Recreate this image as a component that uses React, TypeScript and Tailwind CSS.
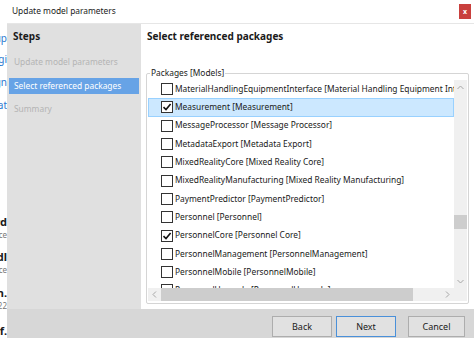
import React from "react";

const items: { label: string; checked?: boolean; selected?: boolean }[] = [
  { label: "MaterialHandlingEquipmentInterface [Material Handling Equipment Interface]" },
  { label: "Measurement [Measurement]", checked: true, selected: true },
  { label: "MessageProcessor [Message Processor]" },
  { label: "MetadataExport [Metadata Export]" },
  { label: "MixedRealityCore [Mixed Reality Core]" },
  { label: "MixedRealityManufacturing [Mixed Reality Manufacturing]" },
  { label: "PaymentPredictor [PaymentPredictor]" },
  { label: "Personnel [Personnel]" },
  { label: "PersonnelCore [Personnel Core]", checked: true },
  { label: "PersonnelManagement [PersonnelManagement]" },
  { label: "PersonnelMobile [PersonnelMobile]" },
  { label: "PersonnelUpgrade [PersonnelUpgrade]" },
];

function Checkbox({ checked }: { checked?: boolean }) {
  return (
    <span className="w-[12px] h-[12px] border border-[#333] bg-white flex items-center justify-center shrink-0">
      {checked && (
        <svg width="10" height="10" viewBox="0 0 10 10">
          <path d="M1.5 5.2 L4 7.6 L8.6 2" fill="none" stroke="#111" strokeWidth="1.6" />
        </svg>
      )}
    </span>
  );
}

function Frag({ text, className }: { text: string; className: string }) {
  return (
    <div className={"flex justify-end whitespace-nowrap " + className}>
      <span>{text}</span>
    </div>
  );
}

export default function App() {
  return (
    <div className="w-[474px] h-[338px] bg-white flex overflow-hidden font-['Noto_Sans',sans-serif] text-[8.4px] text-[#1a1a1a]">
      {/* page behind the dialog */}
      <div className="w-[7px] shrink-0 overflow-hidden flex flex-col">
        <div className="h-[33px]" />
        <Frag text="Setup" className="h-[14px] text-[#2b79d0] text-[10px] leading-[14px]" />
        <div className="h-[7px]" />
        <Frag text="Logi" className="h-[14px] text-[#2b79d0] text-[10px] leading-[14px]" />
        <div className="h-[10px]" />
        <Frag text="Design" className="h-[14px] text-[#2b79d0] text-[10px] leading-[14px]" />
        <div className="h-[9px]" />
        <Frag text="Format" className="h-[14px] text-[#2b79d0] text-[10px] leading-[14px]" />
        <div className="h-[110px]" />
        <Frag text="Record" className="h-[14px] font-bold text-[11px] leading-[14px]" />
        <Frag text="Source" className="h-[11px] text-[#777] text-[8px] leading-[11px]" />
        <div className="h-[11px]" />
        <Frag text="Modl" className="h-[14px] font-bold text-[11px] leading-[14px]" />
        <Frag text="Source" className="h-[11px] text-[#777] text-[8px] leading-[11px]" />
        <div className="h-[11px]" />
        <Frag text="Design." className="h-[14px] font-bold text-[11px] leading-[14px]" />
        <Frag text="2022" className="h-[11px] text-[#777] text-[8px] leading-[11px]" />
        <div className="h-[14px]" />
        <Frag text="of." className="h-[14px] font-bold text-[11px] leading-[14px]" />
      </div>

      {/* dialog */}
      <div className="flex-1 flex flex-col min-w-0">
        <div className="h-[24px] shrink-0 flex items-center justify-between pl-[5px] pr-[3px] border-b border-[#e6e6e6]">
          <span>Update model parameters</span>
          <span className="w-[12px] h-[15px] bg-[#c9403d] text-white text-[7px] font-bold flex items-center justify-center leading-none">
            x
          </span>
        </div>

        <div className="flex-1 flex min-h-0">
          {/* steps */}
          <div className="w-[134px] shrink-0 bg-[#e0e0e0] flex flex-col px-[2px] pt-[4px]">
            <div className="font-bold text-[10px] pl-[4px] h-[16px] leading-[16px]">Steps</div>
            <div className="h-[10px]" />
            <div className="pl-[5px] h-[16px] leading-[16px] text-[#b4b4b4]">Update model parameters</div>
            <div className="h-[8px]" />
            <div className="pl-[5px] h-[16px] leading-[16px] bg-[#67a3e6] text-white">Select referenced packages</div>
            <div className="h-[7px]" />
            <div className="pl-[5px] h-[16px] leading-[16px] text-[#b4b4b4]">Summary</div>
          </div>

          {/* content */}
          <div className="flex-1 min-w-0 bg-white ml-[2px] flex flex-col pl-[3px] pr-[5px] pt-[4px] pb-[5px]">
            <div className="font-bold text-[10px] pl-[1px] h-[16px] leading-[16px]">Select referenced packages</div>
            <div className="flex-1 min-h-0 mt-[29px] border border-[#d5d5d5] rounded-[2px] relative flex flex-col px-[1px] pt-[6px] pb-[2px]">
              <span className="absolute -top-[8px] left-[3px] bg-white px-[1px] leading-[14px]">Packages [Models]</span>
              <div className="flex-1 flex min-h-0">
                <div className="flex-1 min-w-0 overflow-hidden flex flex-col">
                  {items.map((it) => (
                    <div
                      key={it.label}
                      className={
                        "h-[18.3px] shrink-0 flex items-center gap-[2px] pl-[12px] whitespace-nowrap border " +
                        (it.selected ? "bg-[#cce8ff] border-[#99d1ff]" : "border-transparent")
                      }
                    >
                      <Checkbox checked={it.checked} />
                      <span>{it.label}</span>
                    </div>
                  ))}
                </div>
                <div className="w-[13px] shrink-0 bg-[#f0f0f0] flex flex-col items-center">
                  <span className="h-[14px] flex items-center text-[#a6a6a6]">
                    <svg width="7" height="5" viewBox="0 0 7 5"><path d="M0.5 4 L3.5 1 L6.5 4" fill="none" stroke="currentColor" /></svg>
                  </span>
                  <div className="h-[121px]" />
                  <div className="w-[13px] h-[14px] bg-[#cdcdcd]" />
                  <div className="flex-1" />
                  <span className="h-[14px] flex items-center text-[#a6a6a6]">
                    <svg width="7" height="5" viewBox="0 0 7 5"><path d="M0.5 1 L3.5 4 L6.5 1" fill="none" stroke="currentColor" /></svg>
                  </span>
                </div>
              </div>
              <div className="h-[13px] shrink-0 bg-[#f0f0f0] flex items-center">
                <span className="w-[13px] flex justify-center text-[#a6a6a6]">
                  <svg width="5" height="7" viewBox="0 0 5 7"><path d="M4 0.5 L1 3.5 L4 6.5" fill="none" stroke="currentColor" /></svg>
                </span>
                <div className="w-[252px] h-[13px] bg-[#cdcdcd]" />
                <div className="flex-1" />
                <span className="w-[13px] flex justify-center text-[#a6a6a6] mr-[13px]">
                  <svg width="5" height="7" viewBox="0 0 5 7"><path d="M1 0.5 L4 3.5 L1 6.5" fill="none" stroke="currentColor" /></svg>
                </span>
              </div>
            </div>
          </div>
        </div>

        {/* footer */}
        <div className="h-[29px] bg-[#d7d7d7] flex items-start justify-end pt-[7px] pr-[9px] shrink-0">
          <button className="w-[60px] h-[21px] bg-[#e1e1e1] border border-[#adadad] text-[9px]">Back</button>
          <button className="w-[60px] h-[21px] bg-[#e1e1e1] border border-[#4a90d9] text-[9px] ml-[4px]">Next</button>
          <button className="w-[57px] h-[21px] bg-[#e1e1e1] border border-[#adadad] text-[9px] ml-[12px]">Cancel</button>
        </div>
      </div>
    </div>
  );
}
